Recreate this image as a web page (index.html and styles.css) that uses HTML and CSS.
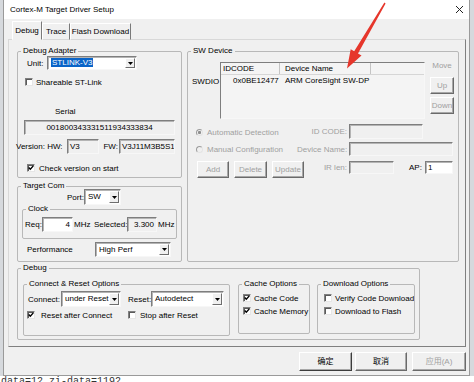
FILE: index.html
```html
<!DOCTYPE html>
<html lang="en">
<head>
    <meta charset="UTF-8">
    <title>Cortex-M Target Driver Setup</title>
    <link rel="stylesheet" href="styles.css">
</head>
<body>
<div class="desk">
    <div class="screen">
        <div class="window">
            <div class="titlebar">
                <span class="title">Cortex-M Target Driver Setup</span>
                <svg class="close" width="9" height="9" viewBox="0 0 9 9"><path d="M1 1 L8 8 M8 1 L1 8" stroke="#222" stroke-width="1" fill="none"/></svg>
            </div>
            <div class="client">
                <div class="tabs">
                    <div class="tab active tab-debug">Debug</div>
                    <div class="tab tab-trace">Trace</div>
                    <div class="tab tab-flash">Flash Download</div>
                </div>
                <div class="panel">
                    <div class="top-area">
                        <div class="left-col">
                            <fieldset class="adapter">
                                <legend>Debug Adapter</legend>
                                <div class="row unit-row">
                                    <span class="unit-lbl">Unit:</span>
                                    <div class="combo w-unit">
                                        <span class="combo-text"><span class="hl">STLINK-V3</span></span>
                                        <span class="drop"><svg width="5" height="3" viewBox="0 0 5 3"><path d="M0 0 H5 L2.5 3 Z" fill="#000"/></svg></span>
                                    </div>
                                </div>
                                <div class="row share-row">
                                    <span class="check"></span>Shareable ST-Link
                                </div>
                                <div class="serial-label">Serial</div>
                                <div class="edit serial">001800343331511934333834</div>
                                <div class="row version-row">
                                    <span class="ver-lbl">Version: HW:</span>
                                    <div class="edit hw-box">V3</div>
                                    <span class="fw-lbl">FW:</span>
                                    <div class="edit fw-box">V3J11M3B5S1</div>
                                </div>
                                <div class="row checkver-row">
                                    <span class="check on"><svg width="6" height="6" viewBox="0 0 6 6"><path d="M0.7 2.6 L2.3 4.3 L5.3 0.9" stroke="#000" stroke-width="1.4" fill="none"/></svg></span><span class="gap1">Check version on start</span>
                                </div>
                            </fieldset>

                            <fieldset class="target-com">
                                <legend>Target Com</legend>
                                <div class="row port-row">
                                    <span class="port-lbl">Port:</span>
                                    <div class="combo w-port">
                                        <span class="combo-text">SW</span>
                                        <span class="drop"><svg width="5" height="3" viewBox="0 0 5 3"><path d="M0 0 H5 L2.5 3 Z" fill="#000"/></svg></span>
                                    </div>
                                </div>
                                <fieldset class="clock">
                                    <legend>Clock</legend>
                                    <div class="row req-row">
                                        <span class="req-lbl">Req:</span>
                                        <div class="edit white right req-box">4</div>
                                        <span class="mhz">MHz</span>
                                        <span class="sel-lbl">Selected:</span>
                                        <div class="edit right sel-box">3.300</div>
                                        <span class="mhz">MHz</span>
                                    </div>
                                </fieldset>
                                <div class="row perf-row">
                                    <span class="perf-lbl">Performance</span>
                                    <div class="combo w-perf">
                                        <span class="combo-text">High Perf</span>
                                        <span class="drop"><svg width="5" height="3" viewBox="0 0 5 3"><path d="M0 0 H5 L2.5 3 Z" fill="#000"/></svg></span>
                                    </div>
                                </div>
                            </fieldset>
                        </div>

                        <fieldset class="sw-device">
                            <legend>SW Device</legend>
                            <div class="sw-list-row">
                                <span class="swdio">SWDIO</span>
                                <div class="devlist">
                                    <div class="devlist-head">
                                        <span class="col-id">IDCODE</span>
                                        <span class="col-name">Device Name</span>
                                        <span class="col-rest"></span>
                                    </div>
                                    <div class="devlist-row">
                                        <span class="col-id cell-id">0x0BE12477</span>
                                        <span class="col-name cell-name">ARM CoreSight SW-DP</span>
                                    </div>
                                </div>
                                <div class="move-col">
                                    <span class="move-lbl dis">Move</span>
                                    <div class="btn move-btn dis">Up</div>
                                    <div class="btn move-btn down-btn dis">Down</div>
                                </div>
                            </div>
                            <div class="row id-row">
                                <span class="radio-item first dis"><span class="radio on"></span>Automatic Detection</span>
                                <span class="field-lbl dis">ID CODE:</span>
                                <div class="edit id-box"></div>
                            </div>
                            <div class="row name-row">
                                <span class="radio-item dis"><span class="radio"></span>Manual Configuration</span>
                                <span class="field-lbl dis">Device Name:</span>
                                <div class="edit name-box"></div>
                            </div>
                            <div class="row btn-row">
                                <div class="btn add-btn dis">Add</div>
                                <div class="btn del-btn dis">Delete</div>
                                <div class="btn upd-btn dis">Update</div>
                                <span class="ir-lbl dis">IR len:</span>
                                <div class="edit ir-box"></div>
                                <span class="ap-lbl">AP:</span>
                                <div class="edit white ap-box">1</div>
                            </div>
                        </fieldset>
                    </div>

                    <fieldset class="debug-group">
                        <legend>Debug</legend>
                        <div class="debug-row">
                            <fieldset class="cr">
                                <legend>Connect &amp; Reset Options</legend>
                                <div class="row connect-row">
                                    <span class="conn-lbl">Connect:</span>
                                    <div class="combo w-conn">
                                        <span class="combo-text">under Reset</span>
                                        <span class="drop"><svg width="5" height="3" viewBox="0 0 5 3"><path d="M0 0 H5 L2.5 3 Z" fill="#000"/></svg></span>
                                    </div>
                                    <span class="reset-lbl">Reset:</span>
                                    <div class="combo w-reset">
                                        <span class="combo-text">Autodetect</span>
                                        <span class="drop"><svg width="5" height="3" viewBox="0 0 5 3"><path d="M0 0 H5 L2.5 3 Z" fill="#000"/></svg></span>
                                    </div>
                                </div>
                                <div class="row cr-checks">
                                    <span class="row cr-first"><span class="check on"><svg width="6" height="6" viewBox="0 0 6 6"><path d="M0.7 2.6 L2.3 4.3 L5.3 0.9" stroke="#000" stroke-width="1.4" fill="none"/></svg></span><span class="gap2">Reset after Connect</span></span>
                                    <span class="row"><span class="check"></span><span class="gap1">Stop after Reset</span></span>
                                </div>
                            </fieldset>
                            <fieldset class="cache">
                                <legend>Cache Options</legend>
                                <div class="row opt-check first-check">
                                    <span class="check on"><svg width="6" height="6" viewBox="0 0 6 6"><path d="M0.7 2.6 L2.3 4.3 L5.3 0.9" stroke="#000" stroke-width="1.4" fill="none"/></svg></span>Cache Code
                                </div>
                                <div class="row opt-check">
                                    <span class="check on"><svg width="6" height="6" viewBox="0 0 6 6"><path d="M0.7 2.6 L2.3 4.3 L5.3 0.9" stroke="#000" stroke-width="1.4" fill="none"/></svg></span>Cache Memory
                                </div>
                            </fieldset>
                            <fieldset class="dl">
                                <legend>Download Options</legend>
                                <div class="row opt-check first-check">
                                    <span class="check"></span>Verify Code Download
                                </div>
                                <div class="row opt-check">
                                    <span class="check"></span>Download to Flash
                                </div>
                            </fieldset>
                        </div>
                    </fieldset>
                </div>
                <div class="dialog-buttons">
                    <div class="btn cjk ok-btn">确定</div>
                    <div class="btn cjk cancel-btn">取消</div>
                    <div class="btn cjk apply-btn dis">应用(A)</div>
                </div>
            </div>
        </div>
    </div>
    <div class="console">data=12 zi-data=1192</div>

    <!-- red annotation arrow drawn over the dialog -->
    <svg class="arrow" width="474" height="382" viewBox="0 0 474 382">
        <polygon points="385.6,3.4 358,53.5 361.5,55.6 347,68.5 350.7,49.2 354.2,51.3 384.4,2.6" fill="#e6362b"/>
    </svg>
</div>
</body>
</html>
```

FILE: styles.css
```css
* { box-sizing: border-box; }

body {
    margin: 0;
    background: #fff;
    font-family: "Liberation Sans", Arial, sans-serif;
    font-size: 8px;
    color: #000;
}

.desk {
    position: relative;
    width: 474px;
    height: 382px;
    overflow: hidden;
}

.screen {
    display: flex;
    height: 376px;
    padding-left: 3px;
    background: #d6d9dd;
}

.window {
    width: 467px;
    height: 376px;
    display: flex;
    flex-direction: column;
    background: #f0f0f0;
    border: 1px solid #9a9a9a;
    border-top: none;
}

.titlebar {
    height: 19px;
    flex: none;
    display: flex;
    align-items: center;
    justify-content: space-between;
    padding: 0 5px 0 6px;
    background: #fff;
}
.title { font-size: 8px; }

.client {
    flex: 1;
    padding-top: 3px;
}

/* tabs */
.tabs {
    display: flex;
    height: 18px;
    margin-left: 8px;
    margin-bottom: -1px;
    position: relative;
    z-index: 1;
}
.tab {
    height: 17px;
    margin-top: 1px;
    line-height: 15px;
    text-align: center;
    border: 1px solid;
    border-color: #fff #7a7a7a transparent #fff;
}
.tab.active {
    height: 19px;
    margin-top: -1px;
    line-height: 18px;
    background: #f0f0f0;
    border-bottom-color: #f0f0f0;
}
.tab-debug { width: 30px; }
.tab-trace { width: 28px; }
.tab-flash { width: 61px; }

.panel {
    margin-left: 4px;
    width: 458px;
    height: 308px;
    padding: 6px 0 0 8px;
    border: 1px solid;
    border-color: #d8d8d8 #808080 #808080 #d8d8d8;
}

/* group boxes */
fieldset {
    margin: 0;
    padding: 0;
    min-width: 0;
    border: 1px solid #b8b8b8;
    border-radius: 2px;
}
legend {
    height: 10px;
    line-height: 10px;
    padding: 0 2px;
    margin-left: 3px;
}

.row { display: flex; align-items: center; white-space: nowrap; }
.dis { color: #a0a0a0; }

/* common controls */
.check {
    width: 8px;
    height: 8px;
    flex: none;
    margin-right: 3px;
    display: flex;
    align-items: center;
    justify-content: center;
    background: #fff;
    border: 1px solid;
    border-color: #808080 #e6e6e6 #e6e6e6 #808080;
    box-shadow: inset 1px 1px #5a5a5a;
}
.gap1 { margin-left: 1px; }
.gap2 { margin-left: 3px; }

.radio {
    width: 7px;
    height: 7px;
    flex: none;
    margin-right: 4px;
    border-radius: 50%;
    border: 1px solid;
    border-color: #9c9c9c #e4e4e4 #e4e4e4 #9c9c9c;
    background: #f0f0f0;
}
.radio.on { background: radial-gradient(circle, #8e8e8e 0 1.3px, #f0f0f0 1.8px); }

.edit {
    height: 15px;
    flex: none;
    padding: 0 2px;
    line-height: 13px;
    white-space: nowrap;
    overflow: hidden;
    background: #f0f0f0;
    border: 1px solid;
    border-color: #7e7e7e #f7f7f7 #f7f7f7 #7e7e7e;
    box-shadow: inset 1px 1px #b4b4b4;
}
.edit.white { background: #fff; }
.edit.right { text-align: right; }

.combo {
    height: 16px;
    flex: none;
    display: flex;
    background: #fff;
    border: 1px solid;
    border-color: #7e7e7e #f7f7f7 #f7f7f7 #7e7e7e;
    box-shadow: inset 1px 1px #b4b4b4;
}
.combo-text {
    flex: 1;
    padding: 1px 0 0 3px;
    line-height: 12px;
    overflow: hidden;
}
.hl {
    background: #0a64c8;
    color: #fff;
    padding: 0 1px;
}
.drop {
    width: 10px;
    margin: 1px 1px 1px 0;
    display: flex;
    align-items: center;
    justify-content: center;
    background: #f0f0f0;
    border: 1px solid;
    border-color: #fff #6e6e6e #6e6e6e #fff;
}

.btn {
    height: 17px;
    flex: none;
    line-height: 15px;
    text-align: center;
    background: #f0f0f0;
    border: 1px solid;
    border-color: #fff #6a6a6a #6a6a6a #fff;
    box-shadow: inset -1px -1px #a8a8a8;
}

/* layout of the page */
.top-area { display: flex; height: 216px; }
.left-col { display: flex; flex-direction: column; width: 165px; }

.adapter { height: 132px; }
.unit-row { height: 14px; padding-left: 9px; }
.unit-lbl { width: 20px; }
.w-unit { width: 90px; height: 14px; }
.w-unit .combo-text { padding-top: 0; }
.share-row { height: 10px; margin-top: 7px; padding-left: 7px; }
.serial-label { height: 10px; line-height: 10px; margin-top: 20px; padding-left: 37px; }
.serial { width: 151px; margin: 3px 0 0 6px; text-align: center; }
.version-row { height: 15px; margin-top: 4px; margin-left: -2px; }
.ver-lbl { width: 51px; }
.hw-box { width: 32px; }
.fw-lbl { width: 20px; padding-right: 1px; text-align: right; }
.fw-box { width: 56px; }
.checkver-row { height: 10px; margin-top: 9px; padding-left: 9px; }

.target-com { height: 81px; margin-top: 3px; }
.port-row { height: 16px; margin-top: -2px; padding-left: 49px; }
.port-lbl { width: 17px; }
.w-port { width: 37px; }
.clock { width: 155px; height: 35px; margin: -1px 0 0 4px; }
.req-row { height: 15px; margin-top: 3px; padding-left: 2px; }
.req-lbl { width: 17px; }
.req-box { width: 31px; }
.mhz { width: 18px; margin-left: 1px; }
.sel-lbl { width: 33px; margin-left: 2px; }
.sel-box { width: 30px; }
.perf-row { height: 15px; margin-top: 3px; padding-left: 9px; }
.perf-lbl { width: 68px; }
.w-perf { width: 76px; height: 15px; }

.sw-device { width: 272px; height: 216px; margin-left: 5px; }
.sw-list-row { display: flex; height: 57px; margin-top: 6px; padding-left: 4px; }
.swdio { width: 28px; margin-top: 15px; line-height: 10px; }
.devlist {
    width: 205px;
    height: 57px;
    background: #f4f4f4;
    border: 1px solid;
    border-color: #7e7e7e #f7f7f7 #f7f7f7 #7e7e7e;
}
.devlist-head {
    display: flex;
    height: 12px;
    line-height: 11px;
    border-bottom: 1px solid #d6d6d6;
}
.devlist-head span { border-right: 1px solid #c4c4c4; }
.devlist-head .col-rest { border-right: none; }
.col-id { width: 59px; padding-left: 2px; }
.col-name { width: 91px; padding-left: 5px; }
.devlist-row { display: flex; height: 12px; line-height: 12px; white-space: nowrap; }
.cell-id { padding-left: 12px; }

.move-col { display: flex; flex-direction: column; width: 24px; margin-left: 5px; }
.move-lbl { line-height: 10px; margin-top: -1px; text-align: center; }
.move-btn { margin-top: 6px; }
.down-btn { margin-top: 3px; }

.id-row { height: 15px; margin-top: 5px; }
.name-row { height: 14px; margin-top: 3px; }
.radio-item { display: flex; align-items: center; width: 109px; padding-left: 8px; }
.radio-item.first { padding-top: 2px; }
.field-lbl { width: 52px; padding-right: 2px; text-align: right; }
.id-box { width: 74px; }
.name-box { width: 104px; height: 14px; }
.btn-row { height: 17px; margin-top: 5px; padding-left: 9px; align-items: flex-start; }
.add-btn { width: 32px; }
.del-btn { width: 33px; margin-left: 5px; }
.upd-btn { width: 32px; margin-left: 5px; }
.ir-lbl { width: 45px; padding-right: 2px; text-align: right; line-height: 14px; }
.ir-box { width: 45px; height: 13px; line-height: 11px; }
.ap-lbl { width: 16px; margin-left: 15px; line-height: 14px; }
.ap-box { width: 28px; height: 13px; line-height: 11px; }

.debug-group { width: 403px; height: 77px; margin-top: 1px; }
.debug-row { display: flex; align-items: flex-start; margin-top: 6px; padding-left: 5px; }
.cr { width: 207px; height: 57px; }
.cache { width: 72px; height: 55px; margin-left: 8px; }
.dl { width: 98px; height: 55px; margin-left: 7px; overflow: hidden; }
.connect-row { height: 16px; margin-top: 2px; padding-left: 4px; }
.conn-lbl { width: 33px; }
.w-conn { width: 60px; }
.reset-lbl { width: 23px; margin-left: 7px; }
.w-reset { width: 73px; }
.cr-checks { height: 10px; margin-top: 3px; padding-left: 3px; }
.cr-first { width: 101px; }
.opt-check { height: 10px; margin-top: 3px; padding-left: 4px; }
.opt-check.first-check { margin-top: 4px; }
.dl .opt-check { padding-left: 6px; }

.dialog-buttons {
    display: flex;
    justify-content: flex-end;
    margin-top: 5px;
    padding-right: 3px;
}
.dialog-buttons .btn { height: 19px; line-height: 17px; }
.cjk { font-family: "Liberation Sans", "Noto Sans CJK SC", sans-serif; }
.ok-btn { width: 53px; border-color: #fff #3c3c3c #3c3c3c #fff; }
.cancel-btn { width: 52px; margin-left: 3px; }
.apply-btn { width: 54px; margin-left: 5px; }

.console {
    height: 6px;
    overflow: hidden;
    padding-left: 1px;
    font-family: "Liberation Mono", monospace;
    font-size: 10px;
    line-height: 12px;
    white-space: nowrap;
    color: #333;
}

.arrow {
    position: absolute;
    left: 0;
    top: 0;
    pointer-events: none;
}
```
